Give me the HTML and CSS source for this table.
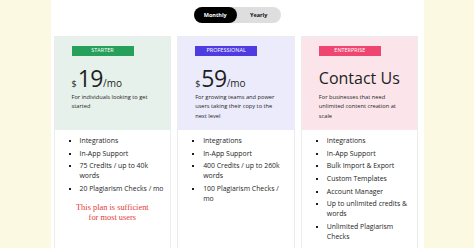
FILE: index.html
```html
<!DOCTYPE html>
<html lang="en">
  <head>
    <meta charset="UTF-8" />
    <meta name="viewport" content="width=device-width, initial-scale=1.0" />
    <title>Pricing</title>
    <link rel="stylesheet" href="styles.css">
  </head>
  <body>
    <div class="panel">
      <div class="toggle">
        <span class="toggle-option active">Monthly</span>
        <span class="toggle-option">Yearly</span>
      </div>

      <div class="plans">
        <div class="plan">
          <div class="plan-head starter">
            <div class="badge">Starter</div>
            <div class="price"><span class="currency">$</span><span class="amount">19</span><span class="period">/mo</span></div>
            <p class="desc">For individuals looking to get started</p>
          </div>
          <ul class="features">
            <li>Integrations</li>
            <li>In-App Support</li>
            <li>75 Credits / up to 40k words</li>
            <li>20 Plagiarism Checks / mo</li>
          </ul>
          <p class="note">This plan is sufficient<br />for most users</p>
        </div>

        <div class="plan">
          <div class="plan-head professional">
            <div class="badge">Professional</div>
            <div class="price"><span class="currency">$</span><span class="amount">59</span><span class="period">/mo</span></div>
            <p class="desc">For growing teams and power users taking their copy to the next level</p>
          </div>
          <ul class="features">
            <li>Integrations</li>
            <li>In-App Support</li>
            <li>400 Credits / up to 260k words</li>
            <li>100 Plagiarism Checks / mo</li>
          </ul>
        </div>

        <div class="plan">
          <div class="plan-head enterprise">
            <div class="badge">Enterprise</div>
            <div class="price"><span class="contact">Contact Us</span></div>
            <p class="desc">For businesses that need unlimited content creation at scale</p>
          </div>
          <ul class="features">
            <li>Integrations</li>
            <li>In-App Support</li>
            <li>Bulk Import &amp; Export</li>
            <li>Custom Templates</li>
            <li>Account Manager</li>
            <li>Up to unlimited credits &amp; words</li>
            <li>Unlimited Plagiarism Checks</li>
          </ul>
        </div>
      </div>
    </div>
  </body>
</html>
```

FILE: styles.css
```css
html,
body {
  height: 100%;
}
body {
  margin: 0;
  background-color: #fcf9e2;
  font-family: "Open Sans", "Noto Sans", sans-serif;
  color: #1e1e1e;
  overflow: hidden;
}
.panel {
  width: 373px;
  min-height: 100%;
  margin: 0 auto;
  background-color: white;
  padding-top: 7px;
  box-sizing: border-box;
}
.toggle {
  display: flex;
  width: 87px;
  height: 16px;
  margin: 0 auto;
  border-radius: 8px;
  background-color: #dedede;
}
.toggle-option {
  flex: 1;
  text-align: center;
  font-size: 5.5px;
  font-weight: bold;
  line-height: 16px;
  border-radius: 8px;
  color: #111;
}
.toggle-option.active {
  background-color: #000;
  color: white;
}
.plans {
  display: grid;
  grid-template-columns: repeat(3, 1fr);
  gap: 6px;
  padding: 0 5px 0 3px;
  margin-top: 13px;
}
.plan {
  border: 1px solid #ececec;
  min-height: 260px;
}
.plan-head {
  height: 93px;
  padding: 9px 17px 0;
  box-sizing: border-box;
}
.starter {
  background-color: #e7f1ec;
}
.professional {
  background-color: #ecebfb;
}
.enterprise {
  background-color: #fbe5ea;
}
.badge {
  width: 62px;
  height: 9.5px;
  line-height: 9.5px;
  font-size: 5.5px;
  text-align: center;
  text-transform: uppercase;
  color: white;
}
.starter .badge {
  background-color: #27a05b;
}
.professional .badge {
  background-color: #4f3be2;
}
.enterprise .badge {
  background-color: #ef4571;
}
.price {
  height: 26px;
  line-height: 26px;
  margin-top: 9.5px;
  white-space: nowrap;
}
.currency {
  font-size: 9px;
  margin-right: 1px;
}
.amount {
  font-size: 23px;
  letter-spacing: -0.5px;
}
.period {
  font-size: 10px;
}
.contact {
  font-size: 16px;
}
.desc {
  margin: 1.5px 0 0;
  font-size: 5.7px;
  line-height: 9.7px;
}
.features {
  margin: 6px 0 0;
  padding: 0 4px 0 25px;
  list-style-type: square;
  font-size: 6.9px;
  line-height: 10px;
}
.features li {
  margin-bottom: 2.7px;
}
.note {
  margin: 9px 0 0;
  text-align: center;
  font-family: "Liberation Serif", serif;
  font-size: 8.4px;
  line-height: 10px;
  color: #e53935;
}
```
